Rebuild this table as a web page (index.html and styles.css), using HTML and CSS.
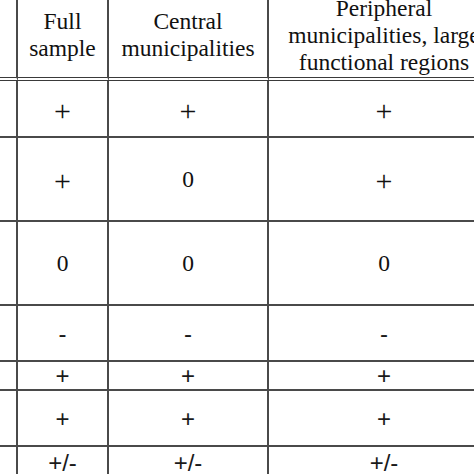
FILE: index.html
```html
<!DOCTYPE html>
<html lang="en">
<head>
<meta charset="utf-8">
<title>Table</title>
<link rel="stylesheet" href="styles.css">
</head>
<body>
<div class="table">
  <div class="cell head"></div>
  <div class="cell head">Full<br>sample</div>
  <div class="cell head">Central<br>municipalities</div>
  <div class="cell head">Peripheral<br>municipalities, large<br>functional regions</div>

  <div class="cell r1"></div>
  <div class="cell r1 serif plus">+</div>
  <div class="cell r1 serif plus">+</div>
  <div class="cell r1 serif plus">+</div>

  <div class="cell r2"></div>
  <div class="cell r2 serif plus">+</div>
  <div class="cell r2 serif">0</div>
  <div class="cell r2 serif plus">+</div>

  <div class="cell r3"></div>
  <div class="cell r3 serif">0</div>
  <div class="cell r3 serif">0</div>
  <div class="cell r3 serif">0</div>

  <div class="cell r4"></div>
  <div class="cell r4 sans">-</div>
  <div class="cell r4 sans">-</div>
  <div class="cell r4 sans">-</div>

  <div class="cell r5"></div>
  <div class="cell r5 sans">+</div>
  <div class="cell r5 sans">+</div>
  <div class="cell r5 sans">+</div>

  <div class="cell r6"></div>
  <div class="cell r6 sans">+</div>
  <div class="cell r6 sans">+</div>
  <div class="cell r6 sans">+</div>

  <div class="cell r7"></div>
  <div class="cell r7 sans">+/-</div>
  <div class="cell r7 sans">+/-</div>
  <div class="cell r7 sans">+/-</div>
</div>
</body>
</html>
```

FILE: styles.css
```css
html, body {
  margin: 0;
  padding: 0;
  background: #ffffff;
  overflow: hidden;
}

body {
  width: 474px;
  height: 474px;
  color: #111111;
  font-family: "Liberation Serif", "Times New Roman", serif;
}

.table {
  display: grid;
  grid-template-columns: 100px 91px 160px 232px;
  grid-template-rows: 91px 57px 84px 84px 56px 29px 56px 56px;
  margin-left: -82px;
  margin-top: -10px;
  width: max-content;
}

.cell {
  box-sizing: border-box;
  border-right: 2px solid #4a4a4a;
  border-bottom: 2px solid #4a4a4a;
  display: flex;
  align-items: center;
  justify-content: center;
  text-align: center;
  white-space: nowrap;
}

.head {
  font-family: "Liberation Serif", "Times New Roman", serif;
  font-size: 23.5px;
  line-height: 27px;
  border-bottom: 4px double #3a3a3a;
  padding-top: 3px;
}

.serif {
  font-family: "Liberation Serif", "Times New Roman", serif;
  font-size: 23.5px;
  line-height: 27px;
}

.serif.plus {
  font-size: 30px;
  padding-top: 3px;
}

.sans {
  font-family: "Liberation Sans", Arial, sans-serif;
  font-size: 24px;
  line-height: 27px;
  color: #1a1a1a;
}

.r7 {
  align-items: flex-start;
  padding-top: 2px;
}
```
